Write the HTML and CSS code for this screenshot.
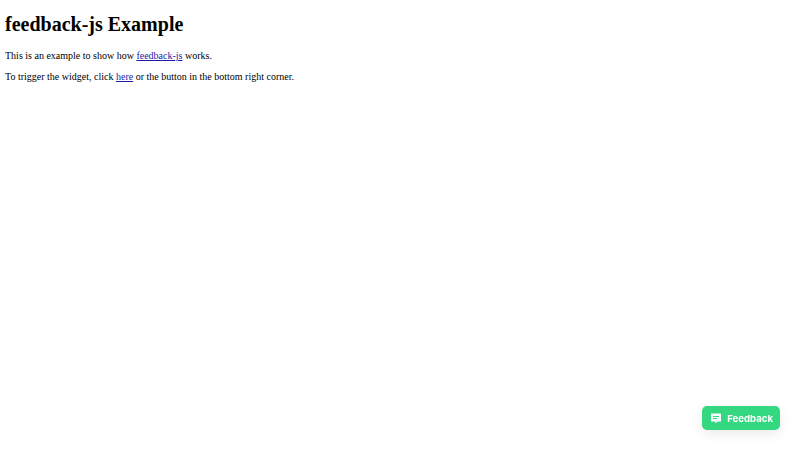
FILE: index.html
```html
<!DOCTYPE html>
<html>
<head>
	<title>feedback-js Example</title>
	<link rel="stylesheet" href="styles.css">
</head>
<body>
	<h1>feedback-js Example</h1>
	<p>This is an example to show how <a href="#">feedback-js</a> works.</p>
	<p>To trigger the widget, click <a href="#">here</a> or the button in the bottom right corner.</p>

	<button class="feedback-btn" type="button">
		<svg class="feedback-icon" viewBox="0 0 24 24" width="12" height="12">
			<path d="M3 3h18a1 1 0 0 1 1 1v14a1 1 0 0 1-1 1h-6l-3 3-3-3H3a1 1 0 0 1-1-1V4a1 1 0 0 1 1-1zm3 5v2h12V8H6zm0 4v2h8v-2H6z" fill-rule="evenodd"/>
		</svg>
		Feedback
	</button>
</body>
</html>
```

FILE: styles.css
```css
/* Page */

body {
	margin: 0 5px;
	font-family: "Liberation Serif", serif;
	font-size: 10px;
	color: black;
	background-color: white;
}

a {
	color: #1c1ca8;
}


/* Widget button */

.feedback-btn {
	position: fixed;
	right: 20px;
	bottom: 20px;
	display: flex;
	align-items: center;
	gap: 5px;
	height: 24px;
	padding: 0 7px 0 8px;
	border: none;
	border-radius: 5px;
	background-color: #34d880;
	color: white;
	font-family: Inter, sans-serif;
	font-size: 9.6px;
	font-weight: 700;
	box-shadow: 0 4px 12px rgba(0, 0, 0, 0.08);
}

.feedback-icon {
	fill: white;
}
```
